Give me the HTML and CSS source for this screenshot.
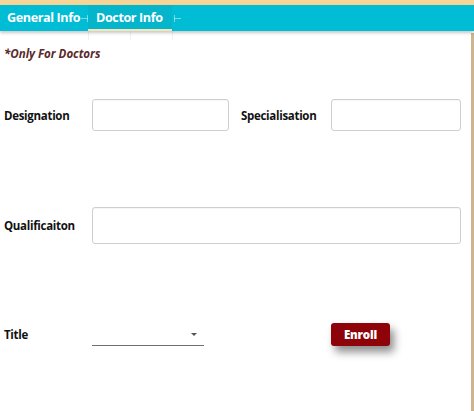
FILE: index.html
```html
<!DOCTYPE html>
<html>
<head>
<meta charset="utf-8">
<link rel="stylesheet" href="styles.css">
</head>
<body>
<div class="page">
  <div class="topstrip"></div>
  <nav class="tabbar">
    <div class="tab">General Info<span class="sep sep-right"></span></div>
    <div class="tab active">Doctor Info</div>
    <span class="sep sep-left"></span>
  </nav>
  <div class="gridlines"><span></span><span></span><span></span></div>
  <main class="content">
    <p class="note">*Only For Doctors</p>
    <div class="row row1">
      <label class="lbl">Designation</label>
      <div class="input w137"></div>
      <label class="lbl lbl2">Specialisation</label>
      <div class="input w130"></div>
    </div>
    <div class="row row2">
      <label class="lbl">Qualificaiton</label>
      <div class="input wide"></div>
    </div>
    <div class="row row3">
      <label class="lbl">Title</label>
      <div class="select"><span class="arrow"></span></div>
      <button class="enroll">Enroll</button>
    </div>
  </main>
  <div class="rightedge"></div>
</div>
</body>
</html>
```

FILE: styles.css
```css
html, body {
  margin: 0;
  padding: 0;
  background: #ffffff;
}
body {
  font-family: "Open Sans", "Noto Sans", sans-serif;
  width: 474px;
  height: 411px;
  overflow: hidden;
}
.page {
  position: relative;
  width: 474px;
  height: 411px;
}
.topstrip {
  height: 5px;
  background: #f7d596;
}
.tabbar {
  position: relative;
  height: 26px;
  background: #00bcd4;
  display: flex;
  align-items: stretch;
  box-shadow: 0 2px 3px rgba(0,0,0,0.22);
  z-index: 2;
}
.tab {
  position: relative;
  color: #ffffff;
  font-weight: 700;
  font-size: 12.6px;
  line-height: 26px;
  letter-spacing: -0.4px;
  padding: 0 0 0 7px;
  width: 88px;
  box-sizing: border-box;
  white-space: nowrap;
}
.tab.active {
  width: 84px;
  padding-left: 8px;
  background: #05b5cc;
  border-bottom: 2px solid #f2e7b6;
  line-height: 25px;
}
.sep {
  position: absolute;
  top: 13px;
  width: 7px;
  height: 1px;
  background: rgba(255,255,255,0.45);
}
.sep::after {
  content: "";
  position: absolute;
  top: -3px;
  width: 1px;
  height: 7px;
  background: rgba(255,255,255,0.45);
}
.sep-right {
  right: 0;
}
.sep-right::after { right: 0; }
.tabbar > .sep-left {
  position: relative;
  top: 13px;
  margin-left: 2px;
}
.sep-left::after { left: 0; }
.gridlines {
  position: absolute;
  top: 0;
  left: 0;
  width: 474px;
  height: 40px;
  pointer-events: none;
  z-index: 3;
}
.gridlines span {
  position: absolute;
  top: 31px;
  width: 1px;
  height: 9px;
  background: rgba(0,0,0,0.06);
}
.gridlines span:nth-child(1) { left: 88px; }
.gridlines span:nth-child(2) { left: 130px; }
.gridlines span:nth-child(3) { left: 172px; }
.content {
  padding: 0 13px 0 4px;
}
.note {
  margin: 14px 0 0 0;
  font-size: 11.6px;
  font-weight: 700;
  font-style: italic;
  color: #5b2b2b;
  line-height: 17px;
  letter-spacing: -0.05px;
}
.row {
  display: flex;
  align-items: center;
}
.lbl {
  width: 88px;
  flex: none;
  font-size: 11.5px;
  font-weight: 700;
  color: #111111;
  letter-spacing: -0.3px;
  white-space: nowrap;
}
.lbl2 {
  width: 90px;
  margin-left: 12px;
}
.input {
  box-sizing: border-box;
  height: 32px;
  border: 1px solid #cfcfcf;
  border-radius: 3px;
  background: #ffffff;
  box-shadow: inset 0 1px 1px rgba(0,0,0,0.04);
}
.w137 { width: 137px; }
.w130 { width: 130px; }
.row1 {
  margin-top: 37px;
}
.row2 {
  margin-top: 76px;
}
.wide {
  width: 369px;
  height: 37px;
}
.row3 {
  margin-top: 79px;
  align-items: flex-start;
}
.row3 .lbl {
  margin-top: 4px;
}
.select {
  position: relative;
  width: 112px;
  height: 22px;
  border-bottom: 1px solid #6f6f6f;
  flex: none;
}
.arrow {
  position: absolute;
  right: 7px;
  top: 10px;
  width: 0;
  height: 0;
  border-left: 3px solid transparent;
  border-right: 3px solid transparent;
  border-top: 3px solid #555555;
}
.enroll {
  margin-left: 127px;
  margin-top: 0;
  width: 59px;
  height: 23px;
  border: none;
  border-radius: 3px;
  background: #8d0309;
  color: #ffffff;
  font-family: "Open Sans", "Noto Sans", sans-serif;
  font-weight: 800;
  font-size: 11.5px;
  letter-spacing: -0.2px;
  padding: 0;
  box-shadow: 4px 6px 8px rgba(0,0,0,0.45);
}
.rightedge {
  position: absolute;
  top: 33px;
  right: 0;
  width: 3px;
  height: 378px;
  background: #cdb58e;
}
```
